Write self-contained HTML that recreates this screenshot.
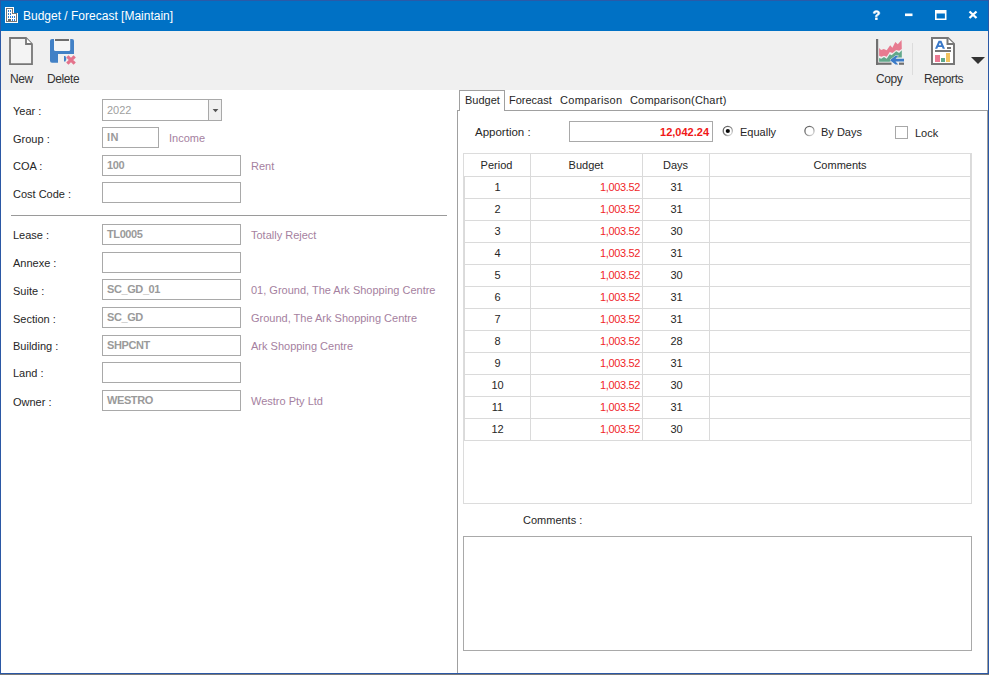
<!DOCTYPE html>
<html><head><meta charset="utf-8">
<style>
*{box-sizing:border-box;margin:0;padding:0}
html,body{width:989px;height:675px;overflow:hidden;background:#fff}
body{position:relative;font-family:"Liberation Sans",sans-serif;font-size:11px;color:#333}
.a{position:absolute}
.t{position:absolute;white-space:pre;line-height:13px;font-size:11px}
.box{position:absolute;border:1px solid #a9a9a9;background:#fff}
.lbl{color:#262626}
.val{color:#9a9a9a;font-weight:bold;letter-spacing:-0.4px}
.desc{color:#a57fa0}
.hl{position:absolute;background:#dadada}
</style></head><body>
<!-- title bar -->
<div class="a" style="left:0;top:0;width:989px;height:31px;background:#0071c5"></div>
<div class="a" style="left:0;top:0;width:989px;height:1px;background:#2a5aa8"></div>
<svg class="a" style="left:5px;top:7px" width="14" height="16" viewBox="0 0 14 16" shape-rendering="crispEdges">
<path d="M0 0H9V6H13V16H0Z" fill="#fff"/>
<path d="M1.5 1.5H7.5V6.5H11.5V14.5H1.5Z" fill="none" stroke="#777" stroke-width="1"/>
<g fill="#2f7ed0"><rect x="3" y="3" width="1" height="2"/><rect x="5" y="3" width="1" height="2"/><rect x="3" y="6" width="1" height="2"/><rect x="5" y="6" width="1" height="2"/><rect x="3" y="9" width="1" height="2"/><rect x="5" y="9" width="1" height="2"/><rect x="7" y="9" width="1" height="2"/><rect x="9" y="9" width="1" height="2"/><rect x="7" y="12" width="1" height="2"/><rect x="9" y="12" width="1" height="2"/></g>
<rect x="3" y="12" width="3" height="2" fill="#6a6a6a"/>
</svg>
<div class="t" style="left:23px;top:9px;font-size:12px;color:#fff;line-height:14px">Budget / Forecast [Maintain]</div>
<svg class="a" style="left:872px;top:10px" width="9" height="10" viewBox="0 0 9 10"><path d="M1.2 3.2C1.2 1.4 2.6 0.6 4.4 0.6C6.4 0.6 7.8 1.5 7.8 3.1C7.8 4.4 7 5 5.8 5.6C5.3 5.9 5.2 6.2 5.2 6.8H3.4C3.4 5.8 3.6 5.2 4.6 4.6C5.4 4.1 5.7 3.8 5.7 3.2C5.7 2.6 5.2 2.3 4.5 2.3C3.7 2.3 3.3 2.7 3.3 3.4Z" fill="#fff" stroke="#fff" stroke-width="0.5"/><rect x="3.1" y="7.6" width="2.5" height="2.3" fill="#fff"/></svg>
<svg class="a" style="left:905px;top:13px" width="8" height="4"><rect x="0" y="0.5" width="7.5" height="2.6" fill="#fff"/></svg>
<svg class="a" style="left:935px;top:10px" width="12" height="10"><path d="M0 0H11.5V10H0Z M1.6 3.4V8.4H9.9V3.4Z" fill="#fff" fill-rule="evenodd"/></svg>
<svg class="a" style="left:968px;top:10px" width="10" height="9" viewBox="0 0 10 9"><path d="M1.5 1.5L8.5 8M8.5 1.5L1.5 8" stroke="#fff" stroke-width="2.3"/></svg>

<!-- toolbar -->
<div class="a" style="left:1px;top:31px;width:987px;height:59px;background:#f0f0f0"></div>

<!-- window borders -->
<div class="a" style="left:0;top:0;width:1px;height:675px;background:#2b58a5"></div>
<div class="a" style="left:988px;top:0;width:1px;height:675px;background:#2b58a5"></div>
<div class="a" style="left:0;top:673px;width:989px;height:1px;background:#2b58a5"></div>
<div class="a" style="left:0;top:674px;width:989px;height:1px;background:#7a7a7a"></div>


<!-- toolbar icons -->
<svg class="a" style="left:8px;top:36px" width="27" height="31" viewBox="0 0 27 31">
<path d="M2 2H18L24 8V28.2H2Z" fill="#f4f4f4" stroke="#777" stroke-width="1.8"/>
<path d="M18 2V8H24" fill="#fff" stroke="#777" stroke-width="1.8"/>
</svg>
<div class="t" style="left:10px;top:73px;font-size:12px;letter-spacing:-0.4px">New</div>

<svg class="a" style="left:49px;top:38px" width="30" height="28" viewBox="0 0 30 28">
<path d="M3 1H23Q25 1 25 3V16H1V3Q1 1 3 1Z" fill="#4281c6"/>
<path d="M5 1H21.2V11.5Q21.2 13 19.7 13H6.5Q5 13 5 11.5Z" fill="#f6f6f6"/>
<rect x="6" y="1" width="14" height="2" fill="#6e6e6e"/>
<path d="M1 15H9V24.7H3Q1 24.7 1 22.7Z" fill="#4281c6"/>
<path d="M15 18H16.4L17.4 21L16.4 23.5H15Z" fill="#4281c6"/>
<path d="M18.3 18.3L25.7 25.7M25.7 18.3L18.3 25.7" stroke="#e4738c" stroke-width="3.2"/>
</svg>
<div class="t" style="left:47px;top:73px;font-size:12px;letter-spacing:-0.4px">Delete</div>

<svg class="a" style="left:875px;top:38px" width="31" height="28" viewBox="0 0 31 28">
<path d="M4.1 10.1L6.1 11.9L8.8 11L11.7 12.3L15.2 7.2L17.4 9.7L20.3 4.1L22.8 6.3L26.6 1.9L26.8 11L24.1 12.8L21.2 11.9L17.4 15L14.8 14.1L11.7 18.8L9 17.7L6.3 18.8L4.1 17.7Z" fill="#e77b90"/>
<path d="M4.1 19.9L6.3 20.8L9 19L11.7 20.8L14.8 16.3L16.6 17.2L21.2 13.2L24.1 15L26.8 12.3V19.4H22.5L18.5 22.5L14.3 23.7H4.1Z" fill="#62a88a"/>
<rect x="1" y="1" width="2.2" height="26" fill="#707070"/>
<rect x="1" y="24.6" width="15.5" height="2.2" fill="#707070"/>
<rect x="24" y="24.6" width="5" height="2.2" fill="#707070"/>
<path d="M15 22.2L20.5 17.8H23.3L20.5 20.8H29V23.5H20.5L23.3 26.6H20.5Z" fill="#3b7bc8" stroke="#f0f0f0" stroke-width="1" paint-order="stroke"/>
</svg>
<div class="a" style="left:912px;top:43px;width:1px;height:32px;background:#dcdcdc"></div>
<div class="t" style="left:876px;top:73px;font-size:12px;letter-spacing:-0.4px">Copy</div>

<svg class="a" style="left:930px;top:36px" width="27" height="30" viewBox="0 0 27 30">
<path d="M2 2H18L24 8V28H2Z" fill="#fff" stroke="#777" stroke-width="2"/>
<path d="M17.5 2V8H24" fill="#fff" stroke="#777" stroke-width="2"/>
<path d="M5 12.8L8.6 4.8H11.4L15 12.8H12.7L12 11H8L7.3 12.8ZM8.8 9.2H11.2L10 6.4Z" fill="#3a78c8" fill-rule="evenodd"/>
<rect x="17" y="11" width="4" height="2" fill="#777"/>
<rect x="5" y="14" width="16" height="2" fill="#777"/>
<rect x="5" y="19" width="5" height="7" fill="#ea7a93"/>
<rect x="11" y="22" width="4" height="4" fill="#5fa88a"/>
<rect x="16" y="17" width="4" height="9" fill="#f1c35f"/>
</svg>
<div class="t" style="left:924px;top:73px;font-size:12px;letter-spacing:-0.4px">Reports</div>
<svg class="a" style="left:971px;top:57px" width="14" height="7" viewBox="0 0 14 7"><path d="M0 0H14L7 7Z" fill="#333"/></svg>

<!-- left panel -->
<div class="t lbl" style="left:13px;top:105px">Year :</div>
<div class="box" style="left:102px;top:99px;width:120px;height:22px"></div>
<div class="a" style="left:208px;top:100px;width:13px;height:20px;background:#f0f0f0;border-left:1px solid #a9a9a9"></div>
<svg class="a" style="left:212px;top:109px" width="7" height="4"><path d="M0.6 0H6.4L3.5 3.2Z" fill="#555"/></svg>
<div class="t" style="left:107px;top:104px;color:#a0a0a0">2022</div>

<div class="t lbl" style="left:13px;top:133px">Group :</div>
<div class="box" style="left:102px;top:127px;width:57px;height:21px"></div>
<div class="t val" style="left:107px;top:131px;letter-spacing:0.5px">IN</div>
<div class="t desc" style="left:169px;top:132px">Income</div>

<div class="t lbl" style="left:13px;top:160px">COA :</div>
<div class="box" style="left:102px;top:155px;width:139px;height:21px"></div>
<div class="t val" style="left:107px;top:159px">100</div>
<div class="t desc" style="left:251px;top:160px">Rent</div>

<div class="t lbl" style="left:13px;top:188px">Cost Code :</div>
<div class="box" style="left:102px;top:182px;width:139px;height:21px"></div>

<div class="a" style="left:11px;top:215px;width:436px;height:1px;background:#9a9a9a"></div>

<div class="t lbl" style="left:13px;top:229px">Lease :</div>
<div class="box" style="left:102px;top:224px;width:139px;height:21px"></div>
<div class="t val" style="left:107px;top:228px">TL0005</div>
<div class="t desc" style="left:251px;top:229px">Totally Reject</div>

<div class="t lbl" style="left:13px;top:257px">Annexe :</div>
<div class="box" style="left:102px;top:252px;width:139px;height:21px"></div>

<div class="t lbl" style="left:13px;top:285px">Suite :</div>
<div class="box" style="left:102px;top:279px;width:139px;height:21px"></div>
<div class="t val" style="left:107px;top:283px">SC_GD_01</div>
<div class="t desc" style="left:251px;top:284px">01, Ground, The Ark Shopping Centre</div>

<div class="t lbl" style="left:13px;top:313px">Section :</div>
<div class="box" style="left:102px;top:307px;width:139px;height:21px"></div>
<div class="t val" style="left:107px;top:311px">SC_GD</div>
<div class="t desc" style="left:251px;top:312px">Ground, The Ark Shopping Centre</div>

<div class="t lbl" style="left:13px;top:340px">Building :</div>
<div class="box" style="left:102px;top:335px;width:139px;height:21px"></div>
<div class="t val" style="left:107px;top:339px">SHPCNT</div>
<div class="t desc" style="left:251px;top:340px">Ark Shopping Centre</div>

<div class="t lbl" style="left:13px;top:367px">Land :</div>
<div class="box" style="left:102px;top:362px;width:139px;height:21px"></div>

<div class="t lbl" style="left:13px;top:396px">Owner :</div>
<div class="box" style="left:102px;top:390px;width:139px;height:21px"></div>
<div class="t val" style="left:107px;top:394px">WESTRO</div>
<div class="t desc" style="left:251px;top:395px">Westro Pty Ltd</div>

<!-- tab panel -->
<div class="a" style="left:457px;top:110px;width:531px;height:563px;border:1px solid #a0a0a0;border-bottom:none"></div>
<div class="a" style="left:459px;top:90px;width:46px;height:21px;border:1px solid #a0a0a0;border-bottom:none;background:#fff"></div>
<div class="t lbl" style="left:465px;top:94px">Budget</div>
<div class="t lbl" style="left:509px;top:94px">Forecast</div>
<div class="t lbl" style="left:560px;top:94px;letter-spacing:0.3px">Comparison</div>
<div class="t lbl" style="left:630px;top:94px;letter-spacing:0.18px">Comparison(Chart)</div>

<div class="t lbl" style="left:475px;top:126px;font-size:11.5px">Apportion :</div>
<div class="box" style="left:569px;top:121px;width:144px;height:21px"></div>
<div class="t" style="left:580px;top:126px;width:129px;text-align:right;color:#f01818;font-weight:bold">12,042.24</div>

<svg class="a" style="left:722px;top:125px" width="12" height="12" viewBox="0 0 12 12"><defs><linearGradient id="rg" x1="0" y1="0" x2="1" y2="1"><stop offset="0" stop-color="#505050"/><stop offset="0.55" stop-color="#8a8a8a"/><stop offset="1" stop-color="#f0f0f0"/></linearGradient></defs><circle cx="5.8" cy="6" r="4.6" fill="#fff" stroke="url(#rg)" stroke-width="1.3"/><circle cx="5.8" cy="6" r="2.1" fill="#0a0a0a"/></svg>
<div class="t lbl" style="left:740px;top:126px">Equally</div>
<svg class="a" style="left:804px;top:125px" width="12" height="12" viewBox="0 0 12 12"><circle cx="5.5" cy="6" r="4.6" fill="#fff" stroke="url(#rg)" stroke-width="1.3"/></svg>
<div class="t lbl" style="left:821px;top:126px">By Days</div>
<div class="box" style="left:895px;top:126px;width:13px;height:13px;border-color:#a8a8a8"></div>
<div class="t lbl" style="left:915px;top:127px">Lock</div>

<!-- grid -->
<div class="a" style="left:463px;top:153px;width:509px;height:351px;border:1px solid #dcdcdc"></div>
<div class="t lbl" style="left:463px;top:159px;width:67px;text-align:center">Period</div>
<div class="t lbl" style="left:530px;top:159px;width:112px;text-align:center">Budget</div>
<div class="t lbl" style="left:642px;top:159px;width:67px;text-align:center">Days</div>
<div class="t lbl" style="left:709px;top:159px;width:262px;text-align:center">Comments</div>
<div class="hl" style="left:530px;top:154px;width:1px;height:287px"></div>
<div class="hl" style="left:642px;top:154px;width:1px;height:287px"></div>
<div class="hl" style="left:709px;top:154px;width:1px;height:287px"></div>
<div class="hl" style="left:970px;top:154px;width:1px;height:287px"></div>
<div class="hl" style="left:464px;top:176px;width:1px;height:265px"></div>
<div class="hl" style="left:464px;top:176px;width:507px;height:1px"></div>
<div class="hl" style="left:464px;top:198px;width:507px;height:1px"></div>
<div class="hl" style="left:464px;top:220px;width:507px;height:1px"></div>
<div class="hl" style="left:464px;top:242px;width:507px;height:1px"></div>
<div class="hl" style="left:464px;top:264px;width:507px;height:1px"></div>
<div class="hl" style="left:464px;top:286px;width:507px;height:1px"></div>
<div class="hl" style="left:464px;top:308px;width:507px;height:1px"></div>
<div class="hl" style="left:464px;top:330px;width:507px;height:1px"></div>
<div class="hl" style="left:464px;top:352px;width:507px;height:1px"></div>
<div class="hl" style="left:464px;top:374px;width:507px;height:1px"></div>
<div class="hl" style="left:464px;top:396px;width:507px;height:1px"></div>
<div class="hl" style="left:464px;top:418px;width:507px;height:1px"></div>
<div class="hl" style="left:464px;top:440px;width:507px;height:1px"></div>
<div class="t lbl" style="left:464px;top:181px;width:67px;text-align:center">1</div>
<div class="t" style="left:530px;top:181px;width:110px;text-align:right;color:#f01f2a;letter-spacing:-0.35px">1,003.52</div>
<div class="t lbl" style="left:643px;top:181px;width:67px;text-align:center">31</div>
<div class="t lbl" style="left:464px;top:203px;width:67px;text-align:center">2</div>
<div class="t" style="left:530px;top:203px;width:110px;text-align:right;color:#f01f2a;letter-spacing:-0.35px">1,003.52</div>
<div class="t lbl" style="left:643px;top:203px;width:67px;text-align:center">31</div>
<div class="t lbl" style="left:464px;top:225px;width:67px;text-align:center">3</div>
<div class="t" style="left:530px;top:225px;width:110px;text-align:right;color:#f01f2a;letter-spacing:-0.35px">1,003.52</div>
<div class="t lbl" style="left:643px;top:225px;width:67px;text-align:center">30</div>
<div class="t lbl" style="left:464px;top:247px;width:67px;text-align:center">4</div>
<div class="t" style="left:530px;top:247px;width:110px;text-align:right;color:#f01f2a;letter-spacing:-0.35px">1,003.52</div>
<div class="t lbl" style="left:643px;top:247px;width:67px;text-align:center">31</div>
<div class="t lbl" style="left:464px;top:269px;width:67px;text-align:center">5</div>
<div class="t" style="left:530px;top:269px;width:110px;text-align:right;color:#f01f2a;letter-spacing:-0.35px">1,003.52</div>
<div class="t lbl" style="left:643px;top:269px;width:67px;text-align:center">30</div>
<div class="t lbl" style="left:464px;top:291px;width:67px;text-align:center">6</div>
<div class="t" style="left:530px;top:291px;width:110px;text-align:right;color:#f01f2a;letter-spacing:-0.35px">1,003.52</div>
<div class="t lbl" style="left:643px;top:291px;width:67px;text-align:center">31</div>
<div class="t lbl" style="left:464px;top:313px;width:67px;text-align:center">7</div>
<div class="t" style="left:530px;top:313px;width:110px;text-align:right;color:#f01f2a;letter-spacing:-0.35px">1,003.52</div>
<div class="t lbl" style="left:643px;top:313px;width:67px;text-align:center">31</div>
<div class="t lbl" style="left:464px;top:335px;width:67px;text-align:center">8</div>
<div class="t" style="left:530px;top:335px;width:110px;text-align:right;color:#f01f2a;letter-spacing:-0.35px">1,003.52</div>
<div class="t lbl" style="left:643px;top:335px;width:67px;text-align:center">28</div>
<div class="t lbl" style="left:464px;top:357px;width:67px;text-align:center">9</div>
<div class="t" style="left:530px;top:357px;width:110px;text-align:right;color:#f01f2a;letter-spacing:-0.35px">1,003.52</div>
<div class="t lbl" style="left:643px;top:357px;width:67px;text-align:center">31</div>
<div class="t lbl" style="left:464px;top:379px;width:67px;text-align:center">10</div>
<div class="t" style="left:530px;top:379px;width:110px;text-align:right;color:#f01f2a;letter-spacing:-0.35px">1,003.52</div>
<div class="t lbl" style="left:643px;top:379px;width:67px;text-align:center">30</div>
<div class="t lbl" style="left:464px;top:401px;width:67px;text-align:center">11</div>
<div class="t" style="left:530px;top:401px;width:110px;text-align:right;color:#f01f2a;letter-spacing:-0.35px">1,003.52</div>
<div class="t lbl" style="left:643px;top:401px;width:67px;text-align:center">31</div>
<div class="t lbl" style="left:464px;top:423px;width:67px;text-align:center">12</div>
<div class="t" style="left:530px;top:423px;width:110px;text-align:right;color:#f01f2a;letter-spacing:-0.35px">1,003.52</div>
<div class="t lbl" style="left:643px;top:423px;width:67px;text-align:center">30</div>

<div class="t lbl" style="left:523px;top:514px">Comments :</div>
<div class="box" style="left:463px;top:536px;width:509px;height:115px;border-color:#a9a9a9"></div>

</body></html>
